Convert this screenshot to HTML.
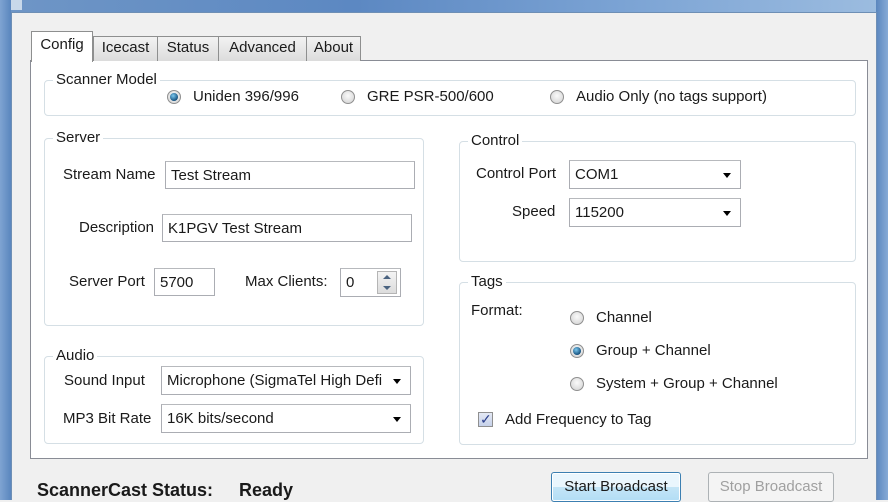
<!DOCTYPE html>
<html><head><meta charset="utf-8"><style>
*{box-sizing:border-box;margin:0;padding:0}
body{width:888px;height:500px;overflow:hidden;position:relative;background:#f0f0f0;font-family:"Liberation Sans",sans-serif;font-size:15px;color:#1a1a1a}
.a{position:absolute}
.t{position:absolute;line-height:18px;white-space:nowrap}
.grp{position:absolute;border:1px solid #d5dfe5;border-radius:4px;background:#fff}
.gl{position:absolute;background:#fff;padding:0 3px;line-height:18px;top:-10px;left:8px}
.tb{position:absolute;border:1px solid #abadb3;border-top-color:#b7b9bd;background:#fff;line-height:18px;padding:5px 5px;white-space:nowrap;overflow:hidden}
.cb::after{content:"";position:absolute;right:9px;top:12px;border-left:4px solid transparent;border-right:4px solid transparent;border-top:5px solid #000}
.r{position:absolute;width:14px;height:14px;border-radius:50%;border:1px solid #8f8f8f;background:radial-gradient(circle at 50% 40%,#fafafa,#d0d0d0)}
.r.on::after{content:"";position:absolute;left:2px;top:2px;width:8px;height:8px;border-radius:50%;background:radial-gradient(circle at 40% 35%,#7cc8ef,#0f4a78 75%)}
.tab{position:absolute;border:1px solid #8e8f8f;border-bottom:none;background:linear-gradient(#f2f2f2,#dcdcdc);line-height:22px;text-align:center}
.btn{position:absolute;border:1px solid #707070;border-radius:3px;background:linear-gradient(#f2f2f2 50%,#dddddd 50%,#cfcfcf);text-align:center;line-height:28px}
</style></head><body>
<div class="a" style="left:0;top:0;width:888px;height:13px;background:linear-gradient(90deg,#6f96c6,#5c88c2 40%,#7ba3d4 70%,#9dbde0)"></div>
<div class="a" style="left:0;top:0;width:22px;height:10px;background:#c8d8ea"></div>
<div class="a" style="left:0;top:0;width:11px;height:500px;background:linear-gradient(90deg,#7fa4d2,#5a86be)"></div>
<div class="a" style="left:876px;top:0;width:12px;height:500px;background:linear-gradient(90deg,#5a86be,#86aad6)"></div>
<div class="a" style="left:11px;top:12px;width:866px;height:488px;background:#f0f0f0;border:1px solid #6e8fb5;border-bottom:none"></div>

<div class="a" style="left:30px;top:60px;width:838px;height:399px;background:#fff;border:1px solid #898c95"></div>
<div class="tab" style="left:93px;top:36px;width:65px;height:25px">Icecast</div>
<div class="tab" style="left:157px;top:36px;width:62px;height:25px">Status</div>
<div class="tab" style="left:218px;top:36px;width:89px;height:25px">Advanced</div>
<div class="tab" style="left:306px;top:36px;width:55px;height:25px">About</div>
<div class="tab" style="left:31px;top:31px;width:62px;height:31px;background:#fff;line-height:26px">Config</div>

<div class="grp" style="left:44px;top:80px;width:812px;height:36px"><div class="gl">Scanner Model</div></div>
<div class="r on" style="left:167px;top:90px"></div><div class="t" style="left:193px;top:88px">Uniden 396/996</div>
<div class="r" style="left:341px;top:90px"></div><div class="t" style="left:367px;top:88px">GRE PSR-500/600</div>
<div class="r" style="left:550px;top:90px"></div><div class="t" style="left:576px;top:88px">Audio Only (no tags support)</div>

<div class="grp" style="left:44px;top:138px;width:380px;height:188px"><div class="gl">Server</div></div>
<div class="t" style="left:63px;top:166px">Stream Name</div>
<div class="tb" style="left:165px;top:161px;width:250px;height:28px">Test Stream</div>
<div class="t" style="left:79px;top:219px">Description</div>
<div class="tb" style="left:162px;top:214px;width:250px;height:28px">K1PGV Test Stream</div>
<div class="t" style="left:69px;top:273px">Server Port</div>
<div class="tb" style="left:154px;top:268px;width:61px;height:28px">5700</div>
<div class="t" style="left:245px;top:273px">Max Clients:</div>
<div class="tb" style="left:340px;top:268px;width:61px;height:29px">0</div>
<div class="a" style="left:377px;top:271px;width:20px;height:23px;border:1px solid #b5b5b5;background:linear-gradient(#f4f4f4,#dcdcdc)"></div>
<div class="a" style="left:383px;top:275px;border-left:4px solid transparent;border-right:4px solid transparent;border-bottom:4px solid #4a6380"></div>
<div class="a" style="left:383px;top:286px;border-left:4px solid transparent;border-right:4px solid transparent;border-top:4px solid #4a6380"></div>

<div class="grp" style="left:44px;top:356px;width:380px;height:88px"><div class="gl">Audio</div></div>
<div class="t" style="left:64px;top:372px">Sound Input</div>
<div class="tb cb" style="left:161px;top:366px;width:250px;height:29px;padding-right:22px">Microphone (SigmaTel High Defi</div>
<div class="t" style="left:63px;top:410px">MP3 Bit Rate</div>
<div class="tb cb" style="left:161px;top:404px;width:250px;height:29px">16K bits/second</div>

<div class="grp" style="left:459px;top:141px;width:397px;height:121px"><div class="gl">Control</div></div>
<div class="t" style="left:476px;top:165px">Control Port</div>
<div class="tb cb" style="left:569px;top:160px;width:172px;height:29px">COM1</div>
<div class="t" style="left:512px;top:203px">Speed</div>
<div class="tb cb" style="left:569px;top:198px;width:172px;height:29px">115200</div>

<div class="grp" style="left:459px;top:282px;width:397px;height:163px"><div class="gl">Tags</div></div>
<div class="t" style="left:471px;top:302px">Format:</div>
<div class="r" style="left:570px;top:311px"></div><div class="t" style="left:596px;top:309px">Channel</div>
<div class="r on" style="left:570px;top:344px"></div><div class="t" style="left:596px;top:342px">Group + Channel</div>
<div class="r" style="left:570px;top:377px"></div><div class="t" style="left:596px;top:375px">System + Group + Channel</div>
<div class="a" style="left:478px;top:412px;width:15px;height:15px;border:1px solid #8f8f8f;background:linear-gradient(#e4e9f4,#c6d1ea)"></div>
<div class="a" style="left:480px;top:410px;font-size:14px;color:#2b3f8c;line-height:18px">✓</div>
<div class="t" style="left:505px;top:411px">Add Frequency to Tag</div>

<div class="t" style="left:37px;top:481px;font-weight:bold;font-size:18px">ScannerCast Status:</div>
<div class="t" style="left:239px;top:481px;font-weight:bold;font-size:18px">Ready</div>
<div class="btn" style="left:551px;top:472px;width:130px;height:30px;border-color:#3c7fb1;background:linear-gradient(#eaf6fd 50%,#c4e5f6 50%,#b2ddf5);box-shadow:inset 0 0 0 1px #fff">Start Broadcast</div>
<div class="btn" style="left:708px;top:472px;width:126px;height:30px;border-color:#adb2b5;background:#f4f4f4;color:#a0a0a0">Stop Broadcast</div>
</body></html>
